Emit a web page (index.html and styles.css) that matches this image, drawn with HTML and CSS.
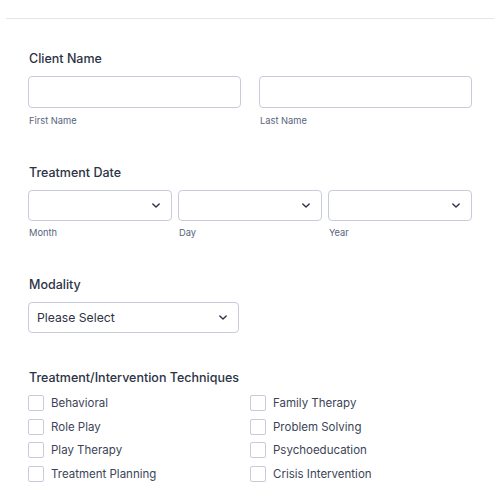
FILE: index.html
```html
<!DOCTYPE html>
<html>
<head>
<meta charset="utf-8">
<link rel="stylesheet" href="styles.css">
</head>
<body>
<div class="page">
  <hr class="divider">
  <form class="form">
    <section class="field">
      <div class="label">Client Name</div>
      <div class="row two">
        <div class="col">
          <div class="input"></div>
          <div class="sublabel">First Name</div>
        </div>
        <div class="col">
          <div class="input"></div>
          <div class="sublabel">Last Name</div>
        </div>
      </div>
    </section>

    <section class="field">
      <div class="label">Treatment Date</div>
      <div class="row three">
        <div class="col">
          <div class="input select"><svg class="chev" viewBox="0 0 10 6"><path d="M1 1 L5 5 L9 1" /></svg></div>
          <div class="sublabel">Month</div>
        </div>
        <div class="col">
          <div class="input select"><svg class="chev" viewBox="0 0 10 6"><path d="M1 1 L5 5 L9 1" /></svg></div>
          <div class="sublabel">Day</div>
        </div>
        <div class="col">
          <div class="input select"><svg class="chev" viewBox="0 0 10 6"><path d="M1 1 L5 5 L9 1" /></svg></div>
          <div class="sublabel">Year</div>
        </div>
      </div>
    </section>

    <section class="field">
      <div class="label">Modality</div>
      <div class="input select modality"><span class="placeholder">Please Select</span><svg class="chev" viewBox="0 0 10 6"><path d="M1 1 L5 5 L9 1" /></svg></div>
    </section>

    <section class="field last">
      <div class="label">Treatment/Intervention Techniques</div>
      <div class="checks">
        <label class="check"><span class="box"></span>Behavioral</label>
        <label class="check"><span class="box"></span>Family Therapy</label>
        <label class="check"><span class="box"></span>Role Play</label>
        <label class="check"><span class="box"></span>Problem Solving</label>
        <label class="check"><span class="box"></span>Play Therapy</label>
        <label class="check"><span class="box"></span>Psychoeducation</label>
        <label class="check"><span class="box"></span>Treatment Planning</label>
        <label class="check"><span class="box"></span>Crisis Intervention</label>
      </div>
    </section>
  </form>
</div>
</body>
</html>
```

FILE: styles.css
```css
html, body {
  margin: 0;
  padding: 0;
  background: #ffffff;
}
body {
  font-family: Inter, "Noto Sans", "Liberation Sans", sans-serif;
  color: #2c3345;
  overflow: hidden;
  height: 484px;
}
.page {
  padding-top: 18px;
}
.divider {
  margin: 0 6px;
  border: 0;
  border-top: 1px solid #e3e5ea;
  height: 0;
}
.form {
  padding: 0 28px;
  padding-top: 30px;
}
.field {
  margin-bottom: 35px;
}
.field.last {
  margin-bottom: 0;
}
.label {
  font-size: 12.5px;
  font-weight: 500;
  line-height: 18px;
  color: #2c3345;
  padding: 1px 0 0 1px;
  margin-bottom: 8px;
}
.row {
  display: grid;
}
.row.two {
  grid-template-columns: 1fr 1fr;
  column-gap: 18px;
}
.row.three {
  grid-template-columns: 1fr 1fr 1fr;
  column-gap: 6px;
}
.input {
  box-sizing: border-box;
  height: 31px;
  border: 1px solid #c8cbdc;
  border-radius: 4px;
  background: #fff;
}
.row.two .input {
  height: 32px;
}
.select {
  display: flex;
  align-items: center;
  justify-content: flex-end;
  padding: 0 11px 0 8px;
}
.chev {
  width: 8px;
  height: 5px;
  fill: none;
  stroke: #2c3345;
  stroke-width: 1.7;
  stroke-linecap: round;
  stroke-linejoin: round;
}
.modality {
  width: 211px;
  justify-content: space-between;
}
.placeholder {
  font-size: 12.2px;
  color: #2c3345;
}
.sublabel {
  font-size: 9.3px;
  line-height: 14px;
  color: #57647e;
  margin-top: 6px;
  padding-left: 1px;
}
.row.three .sublabel {
  margin-top: 5px;
}
.checks {
  display: grid;
  grid-template-columns: 222px 1fr;
  row-gap: 7.67px;
  margin-top: 3.5px;
}
.check {
  display: flex;
  align-items: center;
  font-size: 11.5px;
  color: #3c4457;
  line-height: 16px;
  height: 16px;
}
.box {
  box-sizing: border-box;
  width: 16px;
  height: 16px;
  border: 1px solid #c8cbdc;
  border-radius: 2px;
  margin-right: 7px;
  flex: none;
}
```
